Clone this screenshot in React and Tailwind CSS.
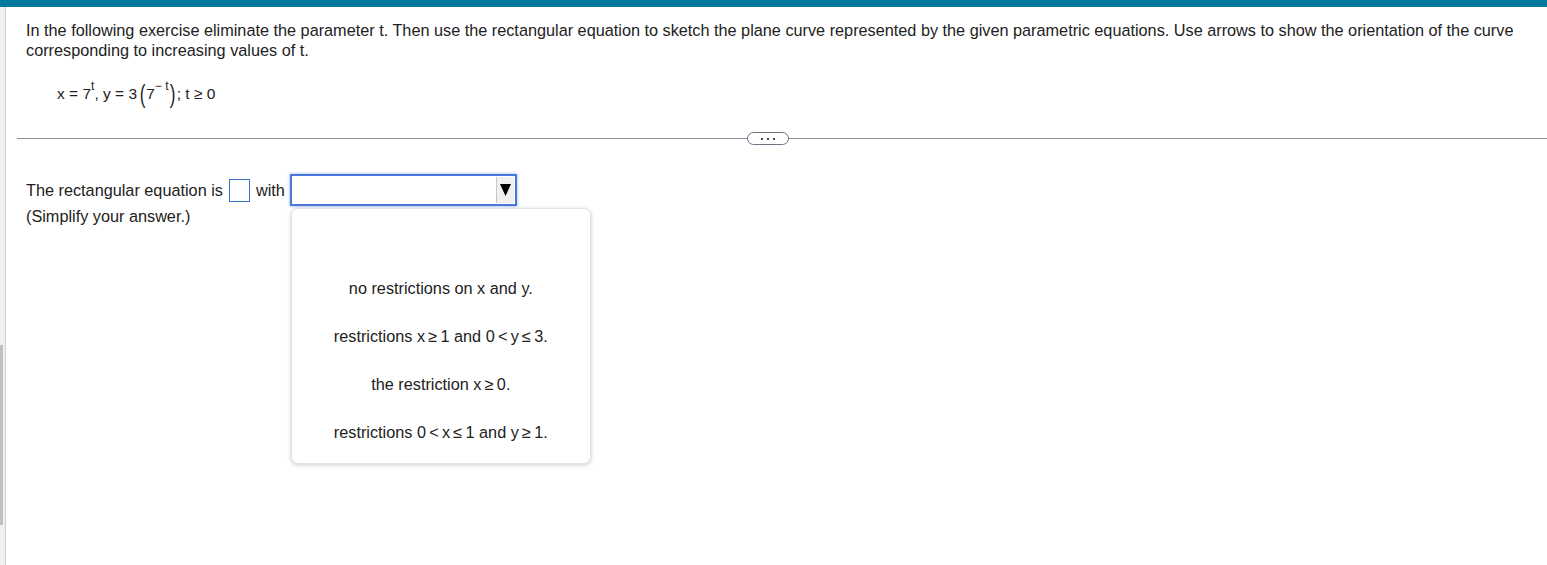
import React from 'react';

const font = { fontFamily: '"Liberation Sans", Arial, sans-serif' };

const options = [
    'no restrictions on x and y.',
    'restrictions x\u2009\u2265\u20091 and 0\u2009<\u2009y\u2009\u2264\u20093.',
    'the restriction x\u2009\u2265\u20090.',
    'restrictions 0\u2009<\u2009x\u2009\u2264\u20091 and y\u2009\u2265\u20091.',
];

function Equation() {
    return (
        <div className="flex items-center text-[15.5px] text-[#222]">
            <span>x = 7</span>
            <span className="relative -top-[8px] text-[12px]">t</span>
            <span>, y = 3</span>
            <span className="ml-[3px] mr-[1px] inline-block scale-y-[1.7] scale-x-[1.1]">(</span>
            <span>7</span>
            <span className="relative -top-[8px] text-[12px]">&minus; t</span>
            <span className="ml-[1px] inline-block scale-y-[1.7] scale-x-[1.1]">)</span>
            <span className="ml-[2px]">; t ≥ 0</span>
        </div>
    );
}

export default function App() {
    return (
        <div className="min-h-screen bg-white flex flex-col" style={font}>
            <div className="h-[7px] bg-[#007a9c]" />
            <div className="flex flex-1">
                <div className="w-[5px] bg-[#f0f0f0] flex flex-col">
                    <div className="h-[338px]" />
                    <div className="h-[180px] w-[3px] bg-[#c1c1c1]" />
                </div>
                <div className="w-px bg-[#ccd0dc]" />
                <div className="flex-1 flex flex-col">
                    <p className="pl-[20px] pr-6 pt-[13px] text-[16.25px] leading-[20px] text-[#222]">
                        In the following exercise eliminate the parameter t. Then use the rectangular equation to sketch the plane curve represented by the given parametric equations. Use arrows to show the orientation of the curve corresponding to increasing values of t.
                    </p>
                    <div className="pl-[51px] pt-[22px] h-[78px]">
                        <Equation />
                    </div>
                    <div className="relative h-px bg-[#8c929c] ml-[11px]">
                        <div className="absolute left-[730px] -top-[6px] w-[42px] h-[13px] rounded-full border border-[#6b7280] bg-white flex items-center justify-center gap-[4px]">
                            <span className="w-[2px] h-[2px] bg-[#3f4650]" />
                            <span className="w-[2px] h-[2px] bg-[#3f4650]" />
                            <span className="w-[2px] h-[2px] bg-[#3f4650]" />
                        </div>
                    </div>
                    <div className="pl-[20px] pt-[35px] text-[16.25px] text-[#222]">
                        <div className="flex items-center">
                            <span>The rectangular equation is</span>
                            <span className="ml-[6px] w-[21px] h-[23px] border border-[#3a73cf]" />
                            <span className="ml-[6px]">with</span>
                            <div className="relative ml-[5px]">
                                <div className="w-[227px] h-[32px] border-2 border-[#4a78d8] shadow-[0_0_3px_#8fb0f0] bg-white flex justify-end items-stretch p-[1px]">
                                    <div className="w-[18px] bg-[#f0f0f0] border-l border-[#c8c8c8] flex items-center justify-center">
                                        <svg width="11" height="12" viewBox="0 0 11 12">
                                            <path d="M0 0 H11 L5.5 12 Z" fill="#000" />
                                        </svg>
                                    </div>
                                </div>
                                <div className="absolute left-[1px] top-[34px] w-[300px] h-[256px] bg-white rounded-[7px] border border-[#e2e2e2] shadow-[0_1px_4px_rgba(0,0,0,0.2)] flex flex-col items-center pt-[69px] gap-[27px] z-10">
                                    {options.map((o) => (
                                        <div key={o} className="text-[16.25px] leading-[21px] text-[#222]">{o}</div>
                                    ))}
                                </div>
                            </div>
                        </div>
                        <p className="leading-[20px]">(Simplify your answer.)</p>
                    </div>
                </div>
            </div>
        </div>
    );
}
